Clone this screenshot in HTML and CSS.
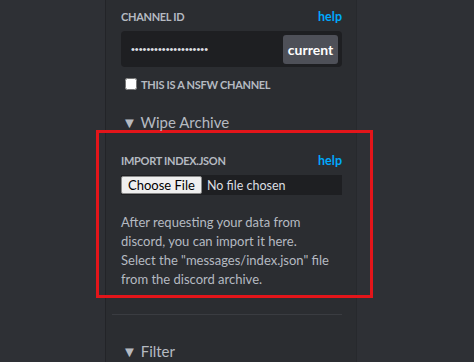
FILE: index.html
```html
<!DOCTYPE html>
<html lang="en">
<head>
    <meta charset="UTF-8">
    <meta name="viewport" content="width=device-width, initial-scale=1.0">
    <title>Undiscord</title>
    <link rel="stylesheet" href="styles.css">
</head>
<body>
    <div class="panel">
        <div class="field">
            <div class="field-head">
                <span class="label">Channel ID</span>
                <a class="help" href="#">help</a>
            </div>
            <div class="input-row">
                <input type="password" class="text-input" value="xxxxxxxxxxxxxxxxxxxx">
                <button class="btn">current</button>
            </div>
            <label class="check">
                <input type="checkbox">
                <span>This is a NSFW channel</span>
            </label>
        </div>

        <h3 class="section-title">▼ Wipe Archive</h3>

        <div class="highlight">
            <div class="field-head">
                <span class="label">Import index.json</span>
                <a class="help" href="#">help</a>
            </div>
            <div class="file-row">
                <input type="file" class="file-input">
            </div>
            <p class="hint">
                After requesting your data from<br>
                discord, you can import it here.<br>
                Select the "messages/index.json" file<br>
                from the discord archive.
            </p>
        </div>

        <hr class="divider">

        <h3 class="section-title filter">▼ Filter</h3>
    </div>
</body>
</html>
```

FILE: styles.css
```css
body {
    margin: 0;
    background: #2e3035;
    font-family: Lato, "Noto Sans", sans-serif;
    height: 362px;
    overflow: hidden;
}
.panel {
    margin-left: 105px;
    width: 221px;
    height: 362px;
    background: #2b2d31;
    border-left: 1px solid #232428;
    border-right: 1px solid #27292d;
    padding: 8px 14px 0 15px;
}
.field-head {
    display: flex;
    justify-content: space-between;
    align-items: center;
    height: 16px;
}
.label {
    font-size: 11px;
    font-weight: 700;
    letter-spacing: -0.3px;
    text-transform: uppercase;
    color: #b5bac1;
}
.help {
    font-size: 12.5px;
    font-weight: 700;
    color: #00a8fc;
    text-decoration: none;
}
.input-row {
    display: flex;
    align-items: center;
    height: 36px;
    margin-top: 7px;
    background: #1e1f22;
    border-radius: 4px;
    padding: 0 4px 0 8px;
}
.text-input {
    flex: 1;
    min-width: 0;
    background: transparent;
    border: none;
    outline: none;
    color: #dbdee1;
    font-size: 11px;
    font-family: "Liberation Sans", sans-serif;
}
.btn {
    background: #4e5058;
    color: #ffffff;
    border: none;
    border-radius: 3px;
    height: 29px;
    width: 55px;
    padding: 0;
    font-family: Lato, sans-serif;
    font-size: 14px;
    font-weight: 700;
}
.check {
    display: flex;
    align-items: center;
    gap: 4px;
    height: 14px;
    margin-top: 10px;
    padding-left: 4px;
    font-size: 11px;
    font-weight: 700;
    letter-spacing: -0.3px;
    text-transform: uppercase;
    color: #b5bac1;
}
.check input {
    margin: 0;
    width: 12px;
    height: 12px;
}
.section-title {
    margin: 23px 0 0 1px;
    font-size: 15px;
    font-weight: 400;
    color: #b5bac1;
    height: 17px;
    line-height: 17px;
}
.highlight {
    margin: -1px -31px 0 -25px;
    padding: 19px 28px 0 22px;
    border: 3px solid #e3151a;
    height: 168px;
    box-sizing: border-box;
}
.file-row {
    height: 20px;
    margin-top: 7px;
    background: #1e1f22;
    display: flex;
    align-items: center;
}
.file-input {
    color: #dbdee1;
    font-family: Lato, sans-serif;
    font-size: 12.5px;
}
.file-input::file-selector-button {
    background: #efefef;
    color: #000000;
    border: 1px solid #8a8a8a;
    border-radius: 2px;
    padding: 0 6px;
    height: 18px;
    margin-right: 5px;
    font-family: Lato, sans-serif;
    font-size: 13px;
}
.hint {
    margin: 18px 0 0 0;
    font-size: 13px;
    line-height: 19px;
    color: #b5bac1;
}
.divider {
    border: none;
    border-top: 1px solid #3a3c41;
    margin: 16px 0 0 -9px;
    width: 230px;
}
.section-title.filter {
    margin-top: 28px;
}
```
